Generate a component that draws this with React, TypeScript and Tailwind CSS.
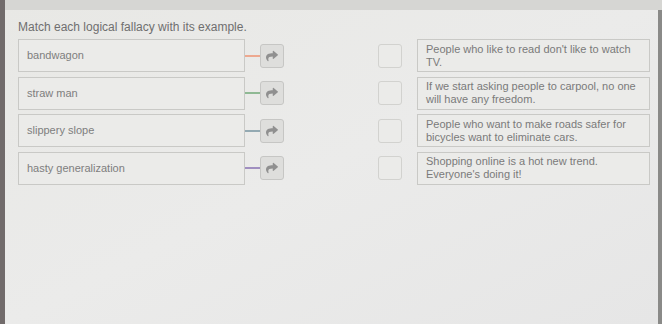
import React from "react";
import { FaShare } from "react-icons/fa";

const ROWS = [
  { term: "bandwagon", line: "bg-[#eda88f]", example: "People who like to read don't like to watch TV." },
  { term: "straw man", line: "bg-[#8fb994]", example: "If we start asking people to carpool, no one will have any freedom." },
  { term: "slippery slope", line: "bg-[#93a9b2]", example: "People who want to make roads safer for bicycles want to eliminate cars." },
  { term: "hasty generalization", line: "bg-[#a08fc0]", example: "Shopping online is a hot new trend. Everyone's doing it!" },
];

export default function App() {
  return (
    <div className="flex h-[324px] w-[662px] overflow-hidden bg-[#6e6a6a] font-['Liberation_Sans',Arial,sans-serif]">
      {/* left bezel */}
      <div className="w-[5px] shrink-0 bg-[#716b6b]" />
      <div className="flex flex-1 flex-col bg-gradient-to-br from-[#e8e8e5] via-[#ebebea] to-[#e6e6e6]">
        {/* top strip */}
        <div className="h-[10px] shrink-0 bg-[#d6d6d3]" />
        <div className="flex flex-1">
          <div className="flex-1 pl-[13px] pt-[10px]">
            <p className="text-[12px] leading-[14px] text-[#6f6f6f]">Match each logical fallacy with its example.</p>

            <div className="mt-[5px] flex flex-col gap-[4.6px]">
              {ROWS.map((r) => (
                <div key={r.term} className="flex h-[33px] items-center">
                  <div className="flex h-full w-[227px] items-center border border-[#c9c9c6] bg-[#ebebe9] pl-[8px] text-[11px] text-[#7e7e7e]">
                    {r.term}
                  </div>
                  <div className={`h-[2px] w-[15px] ${r.line}`} />
                  <div className="flex h-[24px] w-[24px] items-center justify-center rounded-[3px] border border-[#c6c6c4] bg-[#dededc]">
                    <FaShare className="h-[12px] w-[12px] text-[#909090]" />
                  </div>
                  <div className="ml-[94px] h-[24px] w-[24px] rounded-[3px] border border-[#d2d2cf] bg-[#ebebe9]" />
                  <div className="ml-[15px] flex h-full w-[233px] flex-col justify-center border border-[#c9c9c6] bg-[#ebebe9] pl-[8px] pr-[10px] text-[11px] leading-[13px] text-[#7a7a7a]">
                    {r.example}
                  </div>
                </div>
              ))}
            </div>
          </div>
          {/* right bezel */}
          <div className="w-[4px] shrink-0 bg-[#8a8a88]" />
        </div>
      </div>
    </div>
  );
}
